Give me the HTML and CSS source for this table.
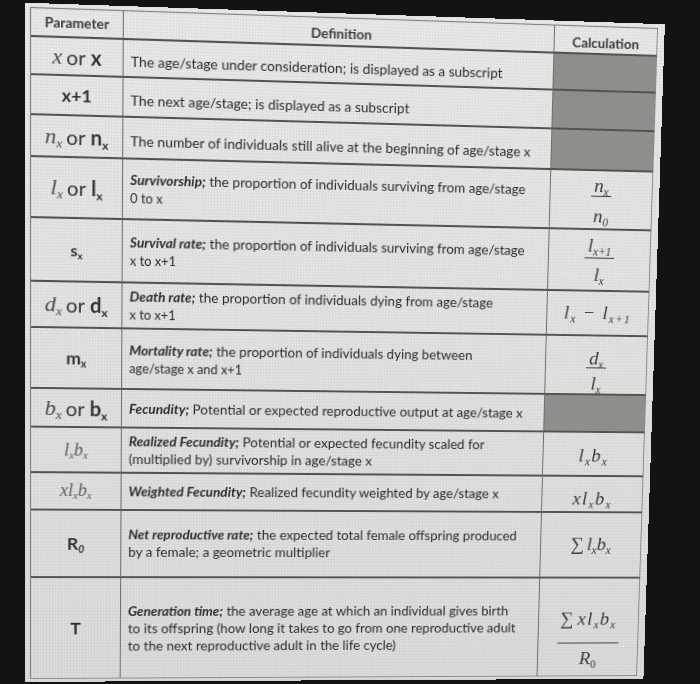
FILE: index.html
```html
<!DOCTYPE html>
<html lang="en">
<head>
<meta charset="utf-8">
<title>Life table parameters</title>
<link rel="stylesheet" href="styles.css">
</head>
<body>
<div class="paper">
  <div class="sheet">
    <div class="cell c1 hd">Parameter</div>
    <div class="cell c2 hd hd-def">Definition</div>
    <div class="cell c3 hd hd-calc">Calculation</div>

    <div class="cell c1 p"><i class="m">x</i><span class="or">or</span><b>x</b></div>
    <div class="cell c2 low"><p class="txt">The age/stage under consideration; is displayed as a subscript</p></div>
    <div class="cell c3 gray"></div>

    <div class="cell c1 p"><b class="mid">x+1</b></div>
    <div class="cell c2 low"><p class="txt">The next age/stage; is displayed as a subscript</p></div>
    <div class="cell c3 gray"></div>

    <div class="cell c1 p"><i class="m">n<sub>x</sub></i><span class="or">or</span><b>n<sub>x</sub></b></div>
    <div class="cell c2 low"><p class="txt">The number of individuals still alive at the beginning of age/stage x</p></div>
    <div class="cell c3 gray"></div>

    <div class="cell c1 p"><i class="m">l<sub>x</sub></i><span class="or">or</span><b>l<sub>x</sub></b></div>
    <div class="cell c2"><p class="txt"><span class="lead">Survivorship;</span> the proportion of individuals surviving from age/stage<br><span class="sm">0 to x</span></p></div>
    <div class="cell c3"><span class="f frac fr-a"><span class="num">n<sub>x</sub></span><span class="den">n<sub>0</sub></span></span></div>

    <div class="cell c1 p"><b class="small">s<sub>x</sub></b></div>
    <div class="cell c2"><p class="txt"><span class="lead">Survival rate;</span> the proportion of individuals surviving from age/stage<br><span class="sm">x to x+1</span></p></div>
    <div class="cell c3"><span class="f frac fr-b"><span class="num">l<sub>x+1</sub></span><span class="den">l<sub>x</sub></span></span></div>

    <div class="cell c1 p"><i class="m">d<sub>x</sub></i><span class="or">or</span><b>d<sub>x</sub></b></div>
    <div class="cell c2"><p class="txt"><span class="lead">Death rate;</span> the proportion of individuals dying from age/stage<br><span class="sm">x to x+1</span></p></div>
    <div class="cell c3"><span class="f wide">l<sub>x</sub><span class="up minus">&minus;</span>l<sub>x+1</sub></span></div>

    <div class="cell c1 p"><b class="mid">m<sub>x</sub></b></div>
    <div class="cell c2"><p class="txt"><span class="lead">Mortality rate;</span> the proportion of individuals dying between<br><span class="sm">age/stage x and x+1</span></p></div>
    <div class="cell c3"><span class="f frac fr-c"><span class="num">d<sub>x</sub></span><span class="den">l<sub>x</sub></span></span></div>

    <div class="cell c1 p"><i class="m">b<sub>x</sub></i><span class="or">or</span><b>b<sub>x</sub></b></div>
    <div class="cell c2"><p class="txt"><span class="lead">Fecundity;</span> Potential or expected reproductive output at age/stage x</p></div>
    <div class="cell c3 gray"></div>

    <div class="cell c1 p"><i class="m light">l<sub>x</sub>b<sub>x</sub></i></div>
    <div class="cell c2"><p class="txt"><span class="lead">Realized Fecundity;</span> Potential or expected fecundity scaled for<br>(multiplied by) survivorship in age/stage x</p></div>
    <div class="cell c3"><span class="f wide dn">l<sub>x</sub>b<sub>x</sub></span></div>

    <div class="cell c1 p"><i class="m light">xl<sub>x</sub>b<sub>x</sub></i></div>
    <div class="cell c2"><p class="txt"><span class="lead">Weighted Fecundity;</span> Realized fecundity weighted by age/stage x</p></div>
    <div class="cell c3"><span class="f wide dn2">xl<sub>x</sub>b<sub>x</sub></span></div>

    <div class="cell c1 p"><b class="mid">R<sub class="it">0</sub></b></div>
    <div class="cell c2"><p class="txt"><span class="lead">Net reproductive rate;</span> the expected total female offspring produced<br>by a female; a geometric multiplier</p></div>
    <div class="cell c3"><span class="f"><span class="up sum">&sum;</span>l<sub>x</sub>b<sub>x</sub></span></div>

    <div class="cell c1 p last"><b class="mid">T</b></div>
    <div class="cell c2 last"><p class="txt"><span class="lead">Generation time;</span> the average age at which an individual gives birth<br>to its offspring (how long it takes to go from one reproductive adult<br>to the next reproductive adult in the life cycle)</p></div>
    <div class="cell c3 last"><span class="f frac fr-d"><span class="num wide"><span class="up sum">&sum;</span>xl<sub>x</sub>b<sub>x</sub></span><span class="den">R<sub class="up">0</sub></span></span></div>
  </div>
</div>
</body>
</html>
```

FILE: styles.css
```css
html, body {
  margin: 0;
  height: 100%;
  background: #131313;
}

body {
  box-sizing: border-box;
  padding: 3px 0 0 25px;
  overflow: hidden;
}

.paper {
  width: fit-content;
  padding: 4px 7px 3px 5px;
  background-color: #e2e2e0;
  background-image:
    repeating-linear-gradient(0deg, rgba(0, 0, 0, 0.035) 0 1px, transparent 1px 3px),
    repeating-linear-gradient(90deg, rgba(0, 0, 0, 0.03) 0 1px, transparent 1px 3px),
    linear-gradient(180deg, #e9e9e7, #dcdcda);
  transform-origin: 5px 4px;
  transform: matrix3d(1.037204, 0.034683, 0, 0.00005924, 0, 1.035883, 0, 0.0000534, 0, 0, 1, 0, 0, 0, 0, 1);
}

.sheet {
  display: grid;
  grid-template-columns: 90px 431px 106px;
  grid-template-rows: 28px 37px 39px 41px 60px 63px 46px 61px 39px 46px 37.5px 69.5px 104px;
  border-top: 1px solid #7c7c7c;
  border-left: 1px solid #7c7c7c;
  font-family: Lato, "Liberation Sans", sans-serif;
  color: #2c2c2c;
}

.cell {
  box-sizing: border-box;
  display: flex;
  align-items: center;
  min-width: 0;
  border-right: 1px solid #6e6e6e;
  border-bottom: 2px solid #525252;
}

.c1 {
  justify-content: center;
}

.c2 {
  padding-left: 7px;
}

.c3 {
  justify-content: center;
  border-right-color: #8a8a8a;
}

.last {
  border-bottom: 1px solid #8a8a8a;
}

.gray {
  background: #8f8e8b;
}

/* header */
.hd {
  font-size: 13.5px;
  font-weight: 700;
  color: #3a3a3a;
}

.hd-def {
  justify-content: center;
  padding: 3px 0 0 0;
  font-size: 13.6px;
}

.hd-calc {
  padding-top: 4px;
  font-size: 13.8px;
}

/* definitions */
.txt {
  margin: 0;
  font-size: 13.6px;
  line-height: 18px;
  white-space: nowrap;
}

.low .txt {
  padding-top: 7px;
  font-size: 13.8px;
}

.lead {
  font-weight: 700;
  font-style: italic;
}

.sm {
  font-size: 12.8px;
}

/* parameter column */
.p {
  font-size: 20px;
  color: #333;
  white-space: nowrap;
}

.p b {
  font-weight: 700;
}

.p .mid {
  font-size: 17.5px;
}

.p .small {
  font-size: 16px;
}

.or {
  margin: 0 5px 0 4px;
}

.m {
  font-family: "Liberation Serif", "DejaVu Serif", serif;
  font-style: italic;
  font-size: 22px;
  color: #4a4a4a;
}

.m.light {
  font-size: 18px;
  color: #5c5c5c;
}

sub {
  font-size: 0.6em;
  line-height: 0;
  vertical-align: -0.3em;
}

.it {
  font-style: italic;
}

/* calculation column */
.f {
  font-family: "Liberation Serif", "DejaVu Serif", serif;
  font-style: italic;
  font-size: 19.5px;
  color: #3a3a3a;
  white-space: nowrap;
}

.wide {
  letter-spacing: 1.5px;
}

.dn {
  margin-top: 4px;
}

.dn2 {
  margin-top: 10px;
}

.up {
  font-style: normal;
}

.sum {
  margin-right: 3px;
}

.minus {
  margin: 0 7px;
}

.frac {
  display: inline-flex;
  flex-direction: column;
  align-items: center;
  line-height: 1;
}

.frac .num {
  border-bottom: 1.5px solid #3e3e3e;
  padding: 0 3px;
}

.fr-a {
  margin-top: 2px;
}

.fr-a .den {
  padding-top: 10px;
}

.fr-b .num {
  padding-bottom: 2px;
}

.fr-b .den {
  padding-top: 7px;
}

.fr-c {
  margin-top: 12px;
}

.fr-c .den {
  padding-top: 6px;
}

.fr-d {
  margin-top: 24px;
}

.fr-d .num {
  padding: 0 2px 16px;
}

.fr-d .den {
  padding-top: 6px;
}
```
